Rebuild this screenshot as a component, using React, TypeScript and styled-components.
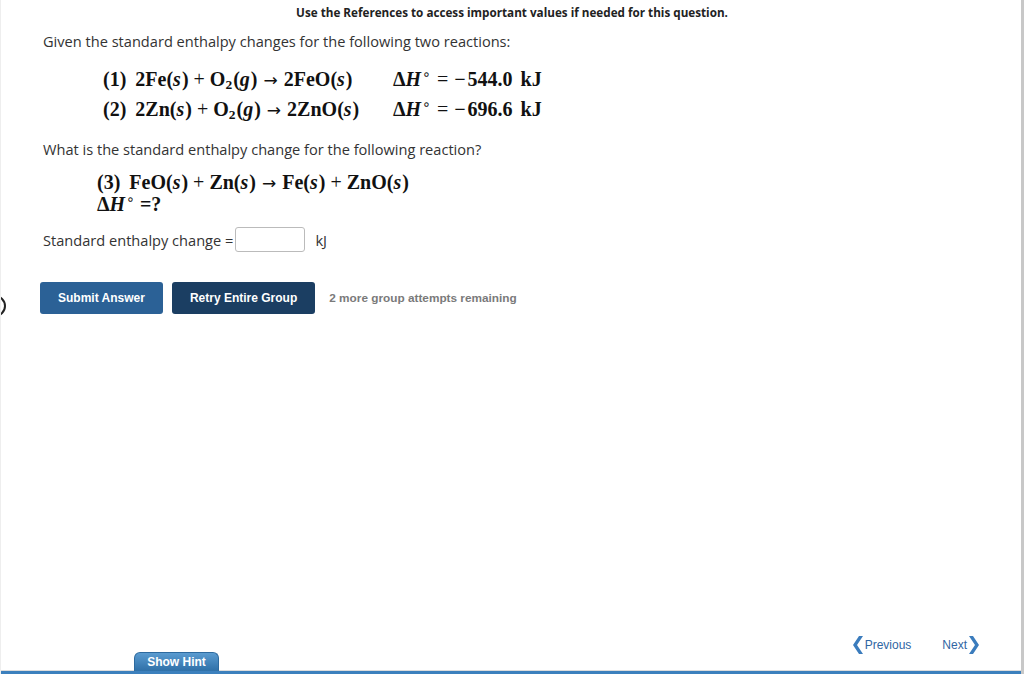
import React from "react";
import styled, { createGlobalStyle } from "styled-components";

const Global = createGlobalStyle`
  html, body { margin: 0; padding: 0; background: #fff; }
  * { box-sizing: border-box; }
`;

const Page = styled.div`
  position: relative;
  width: 1024px;
  height: 674px;
  display: flex;
  flex-direction: column;
  border-left: 1px solid #eeeeee;
  border-right: 3px solid #c8c8c8;
  overflow: hidden;
  font-family: "Open Sans", "Liberation Sans", sans-serif;
  color: #333;
`;

const Header = styled.div`
  text-align: center;
  font-size: 11.7px;
  font-weight: 700;
  color: #222;
  padding-top: 4px;
  line-height: 16px;
  padding-left: 2px;
`;

const Main = styled.div`
  flex: 1;
  padding-left: 42px;
`;

const Para = styled.p<{ $top: number }>`
  margin: ${(p) => p.$top}px 0 0 0;
  font-size: 14.6px;
  line-height: 20px;
  color: #333;
`;

const EqGrid = styled.div`
  display: grid;
  grid-template-columns: 290px auto;
  margin: 17px 0 0 60px;
  row-gap: 7px;
`;

const MathLine = styled.div`
  font-family: "Liberation Serif", "DejaVu Serif", serif;
  font-size: 20px;
  font-weight: 700;
  line-height: 22px;
  color: #111;
  white-space: nowrap;
`;

const I = styled.i`
  font-style: italic;
  margin-right: 1px;
`;

const Sub = styled.sub`
  font-size: 13.5px;
  vertical-align: -3px;
  line-height: 0;
  margin-right: 1px;
`;

const Sup = styled.sup`
  font-family: "DejaVu Sans", sans-serif;
  font-size: 14px;
  vertical-align: 7px;
  line-height: 0;
  font-weight: 400;
  margin-left: 0;
`;

const Sp = styled.span<{ $w: number }>`
  display: inline-block;
  width: ${(p) => p.$w}px;
`;

const Op = styled.span<{ $m: number }>`
  margin: 0 ${(p) => p.$m}px;
  font-weight: 400;
`;

const Arrow = styled.span`
  margin: 0 6px;
  font-family: "DejaVu Sans", sans-serif;
  font-weight: 400;
  font-size: 17px;
`;

const Eq3 = styled.div`
  margin: 13px 0 0 54px;
  display: flex;
  flex-direction: column;
  gap: 0;
  & > div {
    line-height: 21px;
  }
`;

const AnswerRow = styled.div`
  display: flex;
  align-items: center;
  margin-top: 12px;
  font-size: 14.6px;
  color: #333;
`;

const Input = styled.input`
  width: 70px;
  height: 25px;
  margin: 0 10px 0 2px;
  border: 1px solid #bbb;
  border-radius: 3px;
  background: #fff;
`;

const ButtonRow = styled.div`
  display: flex;
  align-items: center;
  gap: 9px;
  margin-top: 30px;
  margin-left: -3px;
`;

const Btn = styled.button<{ $dark?: boolean }>`
  height: 32px;
  padding: 0 18px;
  border: none;
  border-radius: 3px;
  background: ${(p) => (p.$dark ? "#1b3e62" : "#2b6196")};
  color: #fff;
  font-family: "Liberation Sans", Arial, sans-serif;
  font-weight: 700;
  font-size: 12px;
`;

const Remaining = styled.span`
  margin-left: 5px;
  font-family: "Liberation Sans", Arial, sans-serif;
  font-weight: 700;
  font-size: 11.8px;
  color: #7a7a7a;
`;

const Footer = styled.div`
  display: flex;
  align-items: flex-end;
  justify-content: space-between;
  border-bottom: 3px solid #3c80bd;
  box-shadow: inset 0 -1px 0 #dcdcdc;
  height: 54px;
`;

const HintTab = styled.button`
  margin-left: 133px;
  width: 85px;
  height: 19px;
  border: 1px solid #2d6a9f;
  border-bottom: none;
  border-radius: 6px 6px 0 0;
  background: linear-gradient(#5a9bd0, #2f70a8);
  color: #fff;
  font-family: "Liberation Sans", Arial, sans-serif;
  font-weight: 700;
  font-size: 12px;
  padding: 0;
`;

const Nav = styled.div`
  display: flex;
  align-items: center;
  gap: 31px;
  margin-right: 42px;
  margin-bottom: 16px;
`;

const NavLink = styled.span`
  display: flex;
  align-items: center;
  gap: 1px;
  font-family: "Liberation Sans", Arial, sans-serif;
  font-size: 12px;
  color: #2f66a3;
`;

const EdgeCircle = styled.div`
  position: absolute;
  left: -17px;
  top: 295px;
  width: 22px;
  height: 22px;
  border-radius: 50%;
  border: 2px solid #222;
`;

const Chevron = ({ dir }: { dir: "left" | "right" }) => (
  <svg width="11" height="20" viewBox="0 0 11 20">
    {dir === "left" ? (
      <path d="M10 1 L4 10 L10 19 L6 19 L0 10 L6 1 Z" fill="#3b7cbd" />
    ) : (
      <path d="M1 1 L7 10 L1 19 L5 19 L11 10 L5 1 Z" fill="#3b7cbd" />
    )}
  </svg>
);

const DH = () => (
  <>
    Δ<I>H</I>
    <Sup>∘</Sup>
  </>
);

export default function App() {
  return (
    <>
      <Global />
      <Page>
        <EdgeCircle />
        <Header>Use the References to access important values if needed for this question.</Header>
        <Main>
          <Para $top={11}>Given the standard enthalpy changes for the following two reactions:</Para>
          <EqGrid>
            <MathLine>
              (1)<Sp $w={9} />2Fe(<I>s</I>)<Op $m={5}>+</Op>O<Sub>2</Sub>(<I>g</I>)<Arrow>→</Arrow>2FeO(<I>s</I>)
            </MathLine>
            <MathLine>
              <DH />
              <Op $m={6}>=</Op>−<Sp $w={2} />544.0<Sp $w={8} />kJ
            </MathLine>
            <MathLine>
              (2)<Sp $w={9} />2Zn(<I>s</I>)<Op $m={5}>+</Op>O<Sub>2</Sub>(<I>g</I>)<Arrow>→</Arrow>2ZnO(<I>s</I>)
            </MathLine>
            <MathLine>
              <DH />
              <Op $m={6}>=</Op>−<Sp $w={2} />696.6<Sp $w={8} />kJ
            </MathLine>
          </EqGrid>
          <Para $top={18}>What is the standard enthalpy change for the following reaction?</Para>
          <Eq3>
            <MathLine>
              (3)<Sp $w={9} />FeO(<I>s</I>)<Op $m={5}>+</Op>Zn(<I>s</I>)<Arrow>→</Arrow>Fe(<I>s</I>)<Op $m={5}>+</Op>ZnO(<I>s</I>)
            </MathLine>
            <MathLine>
              <DH />
              <Sp $w={5} />=?
            </MathLine>
          </Eq3>
          <AnswerRow>
            Standard enthalpy change =<Input />kJ
          </AnswerRow>
          <ButtonRow>
            <Btn>Submit Answer</Btn>
            <Btn $dark>Retry Entire Group</Btn>
            <Remaining>2 more group attempts remaining</Remaining>
          </ButtonRow>
        </Main>
        <Footer>
          <HintTab>Show Hint</HintTab>
          <Nav>
            <NavLink>
              <Chevron dir="left" />
              Previous
            </NavLink>
            <NavLink>
              Next
              <Chevron dir="right" />
            </NavLink>
          </Nav>
        </Footer>
      </Page>
    </>
  );
}
